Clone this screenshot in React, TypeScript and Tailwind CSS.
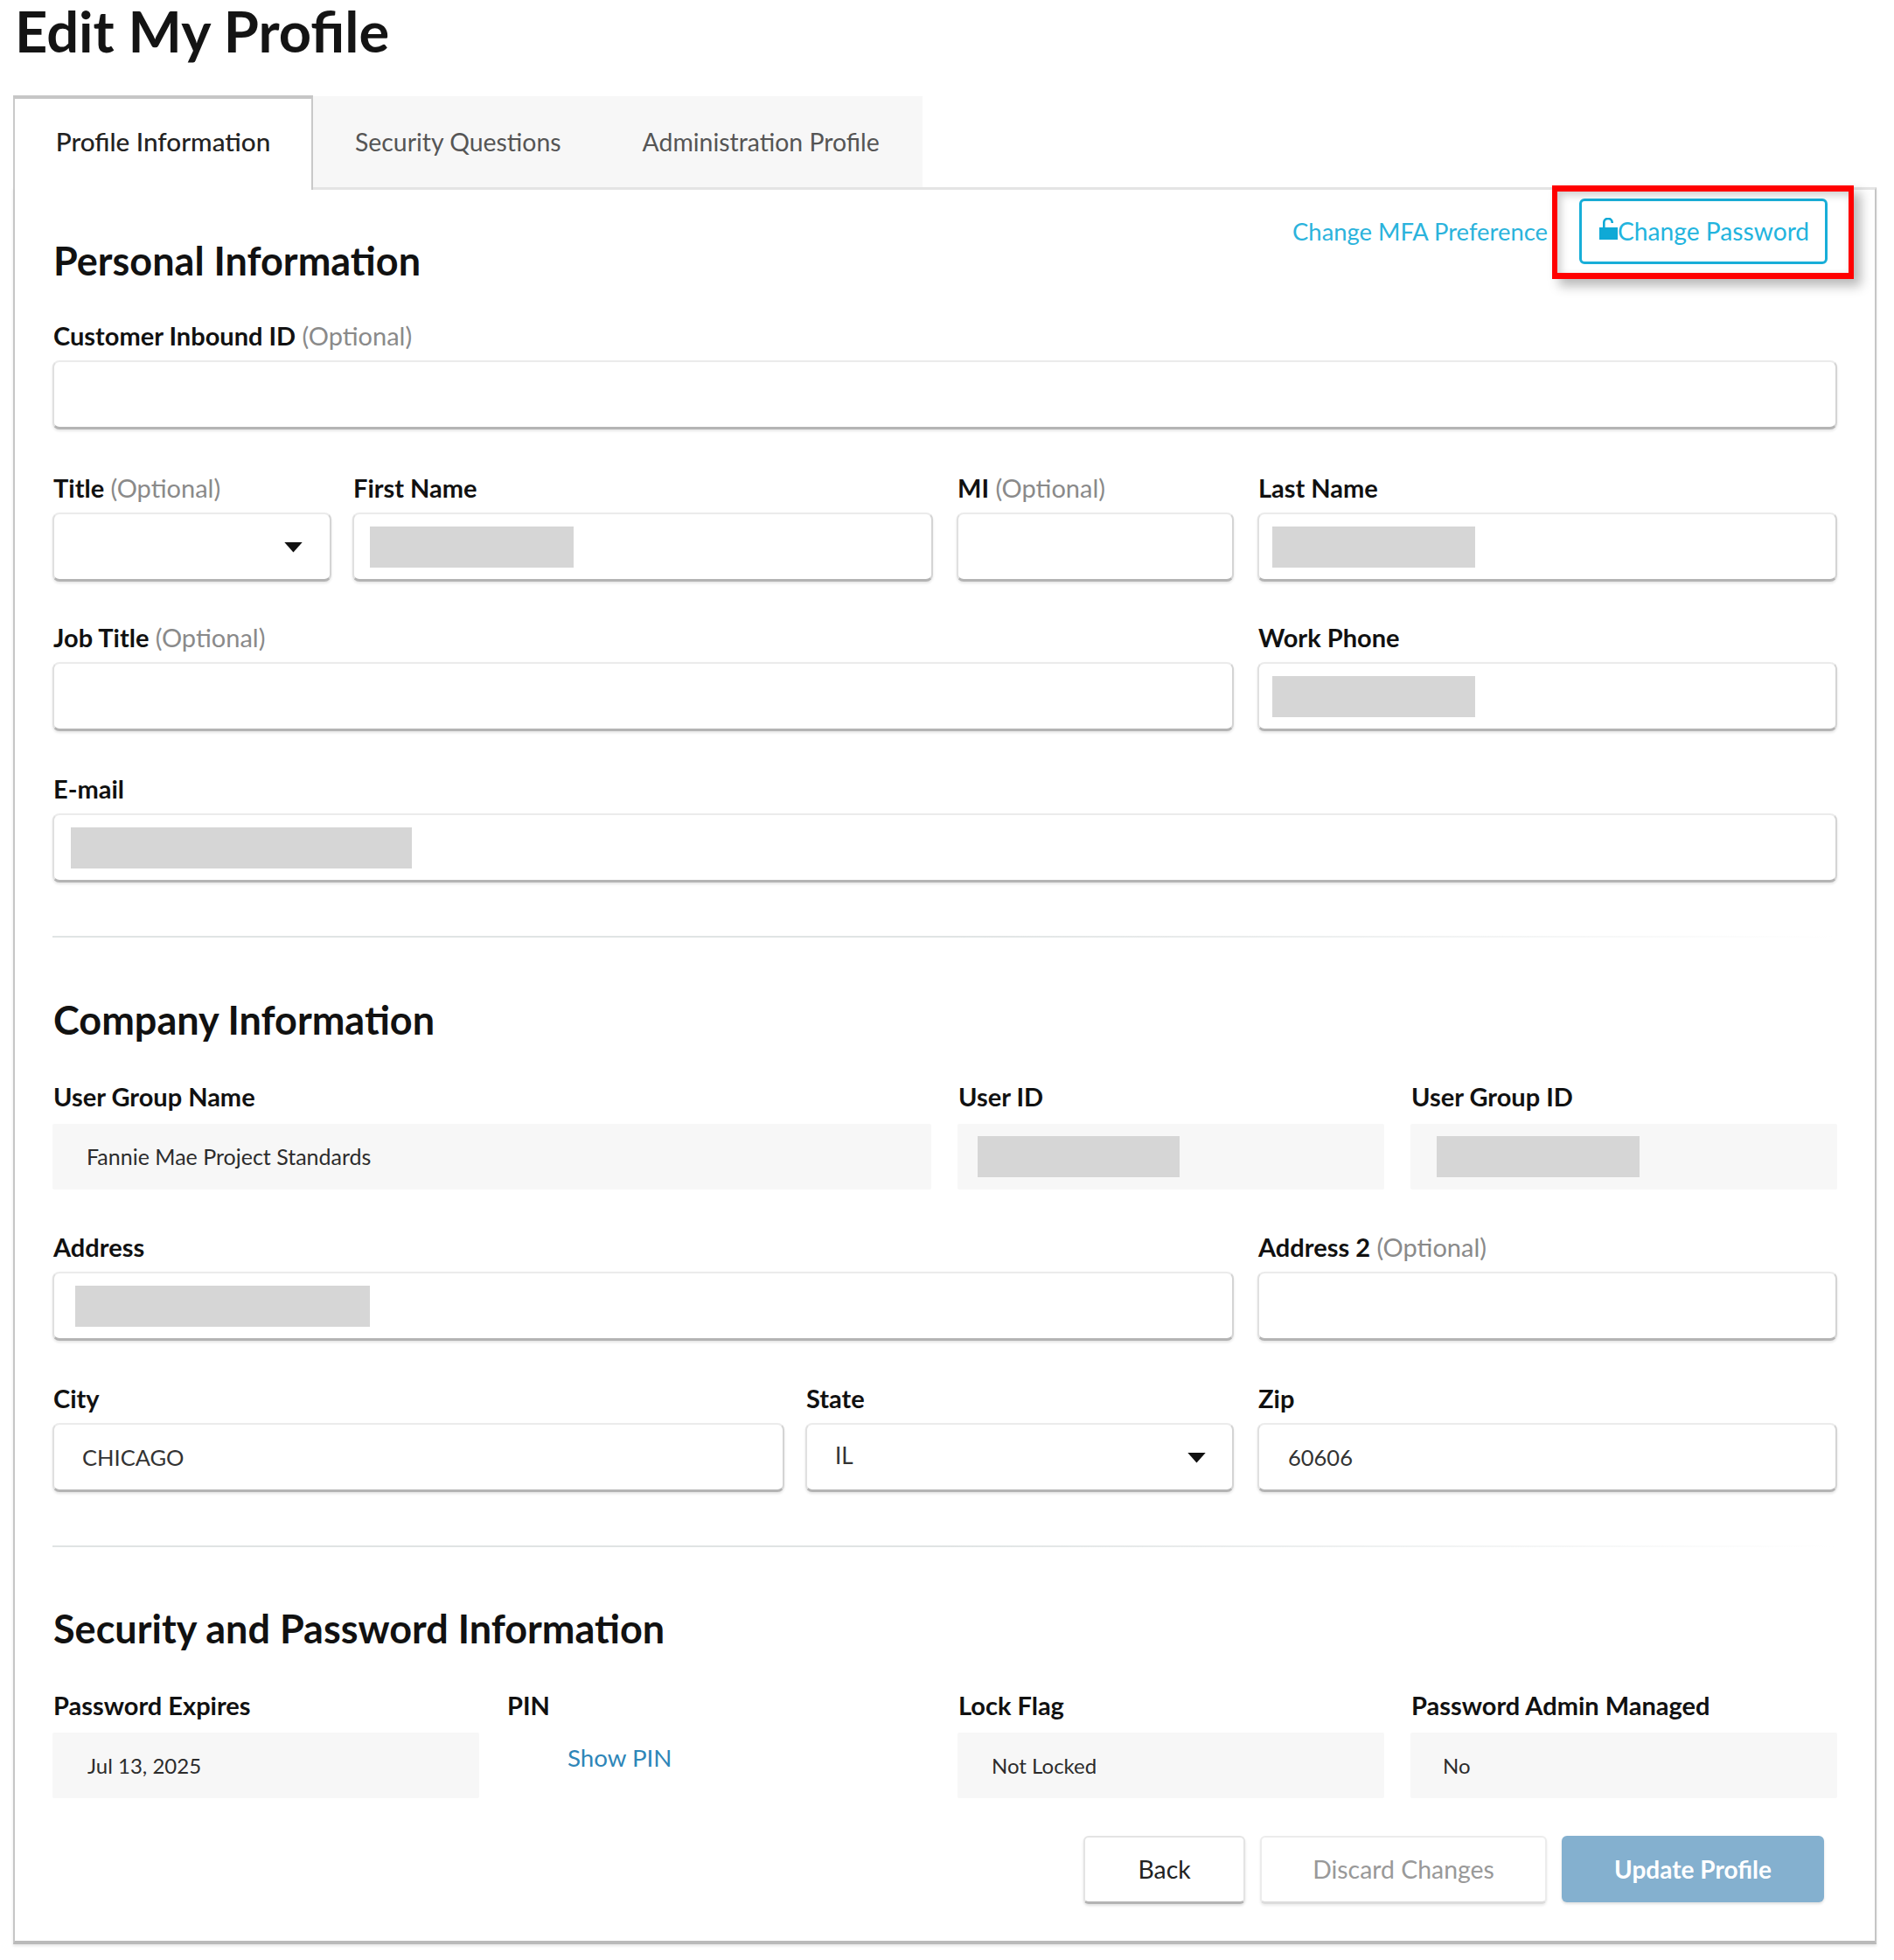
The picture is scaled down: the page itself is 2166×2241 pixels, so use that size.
import React from 'react';

const inputBox =
  'h-[79px] rounded-[8px] border-2 border-[#ebebeb] border-r-[#d4d4d4] border-l-[#e0e0e0] border-b-[3px] border-b-[#b4b4b4] bg-white shadow-[0_2px_3px_rgba(0,0,0,0.1)] flex items-center';
const readBox = 'h-[75px] mt-[3px] rounded-[2px] bg-[#f7f7f7] flex items-center';

const Label: React.FC<{ text: string; optional?: boolean }> = ({ text, optional }) => (
  <div className="h-[55px] leading-[53px] pl-[1px] text-[29px] whitespace-nowrap font-bold text-[#111]">
    {text}
    {optional && <span className="font-normal text-[#8a8a8a]"> (Optional)</span>}
  </div>
);

const Redacted: React.FC<{ className: string }> = ({ className }) => (
  <div className={`bg-[#d6d6d6] h-[47px] ${className}`} />
);

const Caret: React.FC<{ className: string }> = ({ className }) => (
  <svg viewBox="0 0 24 14" className={`w-[23px] h-[13px] fill-[#111] ${className}`}>
    <path d="M1 1h22L12 13.5z" />
  </svg>
);

const SectionTitle: React.FC<{ children: React.ReactNode; className?: string }> = ({ children, className }) => (
  <h2 className={`pl-[1px] text-[45px] leading-[50px] font-bold text-[#111] whitespace-nowrap ${className ?? ''}`}>{children}</h2>
);

const Divider: React.FC<{ className: string }> = ({ className }) => (
  <div className={`h-[2px] bg-gradient-to-r from-[#e0e4e4] via-[#e0e4e4] to-white ${className}`} />
);

export default function App() {
  return (
    <div className="relative w-[2166px] h-[2241px] bg-white pl-[15px] font-['Lato','Noto_Sans',sans-serif] text-[#333]">
      <div className="h-[106px] pl-[2px]">
        <h1 className="text-[65px] leading-[70px] font-bold text-[#141414] whitespace-nowrap">Edit My Profile</h1>
      </div>

      {/* Tabs */}
      <div className="relative z-10 flex h-[108px] items-end">
        <div className="w-[343px] h-[108px] -mb-[3px] pb-[6px] bg-white border-t-[4px] border-t-[#c6c6c6] border-l-2 border-r-2 border-[#c9c9c9] flex items-center justify-center text-[29.7px] font-medium text-[#222]">
          Profile Information
        </div>
        <div className="w-[697px] h-[104px] bg-[#f7f7f7] flex items-center text-[28.400px] text-[#555]">
          <span className="ml-[48px] whitespace-nowrap">Security Questions</span>
          <span className="ml-[93px] whitespace-nowrap">Administration Profile</span>
        </div>
      </div>

      {/* Panel */}
      <div className="w-[2131px] h-[2009px] border-t-[3px] border-t-[#e4e4e4] border-x-2 border-x-[#c6c6c6] border-b-[4px] border-b-[#bababa] shadow-[0_2px_3px_rgba(0,0,0,0.1)] pl-[43px] pr-[43px]">
        {/* Personal Information */}
        <div className="flex justify-between items-start h-[140px]">
          <SectionTitle className="mt-[56px]">Personal Information</SectionTitle>
          <div className="flex items-center gap-[36px] mt-[10px] mr-[11px]">
            <a className="text-[27.400px] text-[#2bb3dc] whitespace-nowrap">Change MFA Preference</a>
            <button className="w-[284px] h-[75px] rounded-[6px] border-[3px] border-[#18aed8] bg-white flex items-center pl-[20px] text-[28.200px] text-[#22b4de] whitespace-nowrap">
              <svg viewBox="0 0 21 25" className="w-[21px] h-[25px] -mt-[6px] fill-[#0fa9d6]">
                <path d="M0 11h21v14H0z" />
                <path d="M4 11V6a6 6 0 0 1 12-1v1h-2.600V5.600a3.400 3.400 0 0 0-6.800 0V11z" />
              </svg>
              Change Password
            </button>
          </div>
        </div>

        <Label text="Customer Inbound ID" optional />
        <div className={inputBox} />

        <div className="flex mt-[40px]">
          <div className="w-[319px] mr-[24px]">
            <Label text="Title" optional />
            <div className={`${inputBox} justify-end pr-[30px]`}>
              <Caret className="" />
            </div>
          </div>
          <div className="w-[664px] mr-[27px]">
            <Label text="First Name" />
            <div className={`${inputBox} pl-[18px]`}>
              <Redacted className="w-[233px]" />
            </div>
          </div>
          <div className="w-[317px] mr-[27px]">
            <Label text="MI" optional />
            <div className={inputBox} />
          </div>
          <div className="w-[663px]">
            <Label text="Last Name" />
            <div className={`${inputBox} pl-[15px]`}>
              <Redacted className="w-[232px]" />
            </div>
          </div>
        </div>

        <div className="flex mt-[37px]">
          <div className="w-[1351px] mr-[27px]">
            <Label text="Job Title" optional />
            <div className={inputBox} />
          </div>
          <div className="w-[663px]">
            <Label text="Work Phone" />
            <div className={`${inputBox} pl-[15px]`}>
              <Redacted className="w-[232px]" />
            </div>
          </div>
        </div>

        <div className="mt-[39px]">
          <Label text="E-mail" />
          <div className={`${inputBox} pl-[19px]`}>
            <Redacted className="w-[390px]" />
          </div>
        </div>

        <Divider className="mt-[61px]" />

        {/* Company Information */}
        <SectionTitle className="mt-[69px]">Company Information</SectionTitle>
        <div className="flex mt-[36px]">
          <div className="w-[1005px] mr-[30px]">
            <Label text="User Group Name" />
            <div className={`${readBox} pl-[39px] text-[25px] text-[#2c2c2c]`}>Fannie Mae Project Standards</div>
          </div>
          <div className="w-[488px] mr-[30px]">
            <Label text="User ID" />
            <div className={`${readBox} pl-[23px]`}>
              <Redacted className="w-[231px]" />
            </div>
          </div>
          <div className="w-[488px]">
            <Label text="User Group ID" />
            <div className={`${readBox} pl-[30px]`}>
              <Redacted className="w-[232px]" />
            </div>
          </div>
        </div>

        <div className="flex mt-[39px]">
          <div className="w-[1351px] mr-[27px]">
            <Label text="Address" />
            <div className={`${inputBox} pl-[24px]`}>
              <Redacted className="w-[337px]" />
            </div>
          </div>
          <div className="w-[663px]">
            <Label text="Address 2" optional />
            <div className={inputBox} />
          </div>
        </div>

        <div className="flex mt-[39px]">
          <div className="w-[837px] mr-[24px]">
            <Label text="City" />
            <div className={`${inputBox} pl-[32px] text-[25.500px] text-[#333]`}>CHICAGO</div>
          </div>
          <div className="w-[490px] mr-[27px]">
            <Label text="State" />
            <div className={`${inputBox} justify-between pl-[32px] pr-[29px] text-[26px] text-[#333]`}>
              <span className="-mt-[3px]">IL</span>
              <Caret className="" />
            </div>
          </div>
          <div className="w-[663px]">
            <Label text="Zip" />
            <div className={`${inputBox} pl-[33px] text-[25.500px] text-[#333]`}>60606</div>
          </div>
        </div>

        <Divider className="mt-[61px]" />

        {/* Security and Password Information */}
        <SectionTitle className="mt-[68px]">Security and Password Information</SectionTitle>
        <div className="flex mt-[36px]">
          <div className="w-[488px] mr-[31px]">
            <Label text="Password Expires" />
            <div className={`${readBox} pl-[40px] text-[24px] text-[#2c2c2c]`}>Jul 13, 2025</div>
          </div>
          <div className="w-[516px]">
            <Label text="PIN" />
            <div className="h-[64px] pl-[70px] flex items-center text-[27.700px] text-[#2e86b8]">Show PIN</div>
          </div>
          <div className="w-[488px] mr-[30px]">
            <Label text="Lock Flag" />
            <div className={`${readBox} pl-[39px] text-[24px] text-[#2c2c2c]`}>Not Locked</div>
          </div>
          <div className="w-[488px]">
            <Label text="Password Admin Managed" />
            <div className={`${readBox} pl-[37px] text-[24px] text-[#2c2c2c]`}>No</div>
          </div>
        </div>

        <div className="flex justify-end gap-[17px] mt-[43px] pr-[15px] text-[28.400px]">
          <button className="w-[185px] h-[78px] rounded-[6px] border-2 border-[#e4e4e4] border-b-[3px] border-b-[#b4b4b4] bg-white text-[#222] shadow-[0_2px_3px_rgba(0,0,0,0.12)]">Back</button>
          <button className="w-[328px] h-[78px] rounded-[6px] border-2 border-[#ececec] border-b-[3px] border-b-[#dcdcdc] bg-white text-[#999] shadow-[0_2px_3px_rgba(0,0,0,0.08)]">Discard Changes</button>
          <button className="w-[300px] h-[76px] rounded-[6px] bg-[#84b0cf] text-[28px] text-white font-bold shadow-[0_2px_3px_rgba(0,0,0,0.12)]">Update Profile</button>
        </div>
      </div>

      {/* Red annotation box drawn over the screenshot */}
      <div className="absolute left-[1775px] top-[212px] w-[345px] h-[107px] border-x-[6px] border-y-[7px] border-[#ff0000] z-20 shadow-[8px_8px_12px_rgba(0,0,0,0.28),inset_4px_4px_10px_rgba(0,0,0,0.2)]" />
    </div>
  );
}
